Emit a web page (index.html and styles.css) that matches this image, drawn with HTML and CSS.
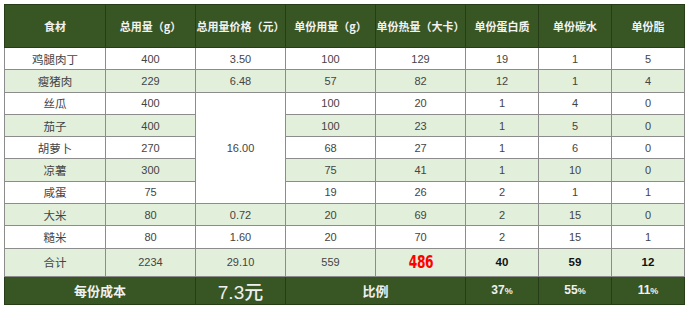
FILE: index.html
```html
<!DOCTYPE html>
<html lang="zh">
<head>
<meta charset="utf-8">
<link rel="stylesheet" href="styles.css">
</head>
<body>
<table class="sheet">
  <colgroup>
    <col class="c-wide"><col class="c-mid"><col class="c-mid"><col class="c-mid"><col class="c-mid"><col class="c-nar"><col class="c-nar"><col class="c-nar">
  </colgroup>
  <thead>
    <tr class="head">
      <th>食材</th><th>总用量（g）</th><th>总用量价格（元）</th><th>单份用量（g）</th><th>单份热量（大卡）</th><th>单份蛋白质</th><th>单份碳水</th><th>单份脂</th>
    </tr>
  </thead>
  <tbody>
    <tr class="w"><td>鸡腿肉丁</td><td>400</td><td>3.50</td><td>100</td><td>129</td><td>19</td><td>1</td><td>5</td></tr>
    <tr class="g"><td>瘦猪肉</td><td>229</td><td>6.48</td><td>57</td><td>82</td><td>12</td><td>1</td><td>4</td></tr>
    <tr class="w"><td>丝瓜</td><td>400</td><td rowspan="5" class="merged">16.00</td><td>100</td><td>20</td><td>1</td><td>4</td><td>0</td></tr>
    <tr class="g"><td>茄子</td><td>400</td><td>100</td><td>23</td><td>1</td><td>5</td><td>0</td></tr>
    <tr class="w"><td>胡萝卜</td><td>270</td><td>68</td><td>27</td><td>1</td><td>6</td><td>0</td></tr>
    <tr class="g"><td>凉薯</td><td>300</td><td>75</td><td>41</td><td>1</td><td>10</td><td>0</td></tr>
    <tr class="w"><td>咸蛋</td><td>75</td><td>19</td><td>26</td><td>2</td><td>1</td><td>1</td></tr>
    <tr class="g"><td>大米</td><td>80</td><td>0.72</td><td>20</td><td>69</td><td>2</td><td>15</td><td>0</td></tr>
    <tr class="w"><td>糙米</td><td>80</td><td>1.60</td><td>20</td><td>70</td><td>2</td><td>15</td><td>1</td></tr>
    <tr class="g total"><td>合计</td><td>2234</td><td>29.10</td><td>559</td><td class="kcal"><span class="kcal-num">486</span></td><td class="b">40</td><td class="b">59</td><td class="b">12</td></tr>
  </tbody>
  <tfoot>
    <tr class="foot">
      <td colspan="2" class="f-label">每份成本</td>
      <td class="f-cost">7.3元</td>
      <td colspan="2" class="f-label">比例</td>
      <td class="f-pct">37<span class="pc">%</span></td>
      <td class="f-pct">55<span class="pc">%</span></td>
      <td class="f-pct">11<span class="pc">%</span></td>
    </tr>
  </tfoot>
</table>
</body>
</html>
```

FILE: styles.css
```css
html, body {
  margin: 0;
  padding: 0;
  background: #ffffff;
}

body {
  padding: 4px 0 0 4px;
  font-family: "Liberation Sans", "Noto Sans CJK SC", sans-serif;
}

.sheet {
  border-collapse: collapse;
  table-layout: fixed;
  width: 681px;
  border: 1px solid #9a9a9a;
}

.c-wide { width: 101px; }
.c-mid { width: 90px; }
.c-nar { width: 73px; }

.sheet th,
.sheet td {
  padding: 0;
  text-align: center;
  vertical-align: middle;
  white-space: nowrap;
  overflow: hidden;
}

.head th {
  height: 42px;
  background: #375623;
  color: #f2f2f2;
  font-size: 11px;
  font-weight: bold;
  font-family: "Noto Sans CJK SC", sans-serif;
  border: 1px solid #263d17;
}

tbody td {
  height: 21.3px;
  font-size: 11px;
  color: #444444;
  border: 1px solid #8c8c8c;
}

tbody td:first-child {
  font-family: "Noto Sans CJK SC", sans-serif;
  font-size: 11.5px;
}

.w td { background: #ffffff; }
.g td { background: #e2efda; }
.g td.merged, .merged { background: #ffffff; }

.total td {
  height: 27px;
}

.total td.b {
  font-weight: bold;
  color: #111111;
  font-size: 11.5px;
}

.kcal-num {
  display: inline-block;
  color: #ff0000;
  font-weight: bold;
  font-size: 17px;
  font-family: "DejaVu Sans", sans-serif;
  transform: scaleX(0.72);
  letter-spacing: -0.5px;
}

.foot td {
  height: 24px;
  background: #375623;
  color: #f0f0f0;
  border: 1px solid #263d17;
  font-weight: bold;
}

.f-label {
  font-family: "Noto Sans CJK SC", sans-serif;
  font-size: 13px;
}

.f-cost {
  font-size: 19px;
  font-family: "Liberation Sans", "Noto Sans CJK SC", sans-serif;
}

.foot td.f-cost {
  font-weight: 500;
}

.f-pct {
  font-size: 12px;
}

.pc {
  font-size: 9px;
}
```
